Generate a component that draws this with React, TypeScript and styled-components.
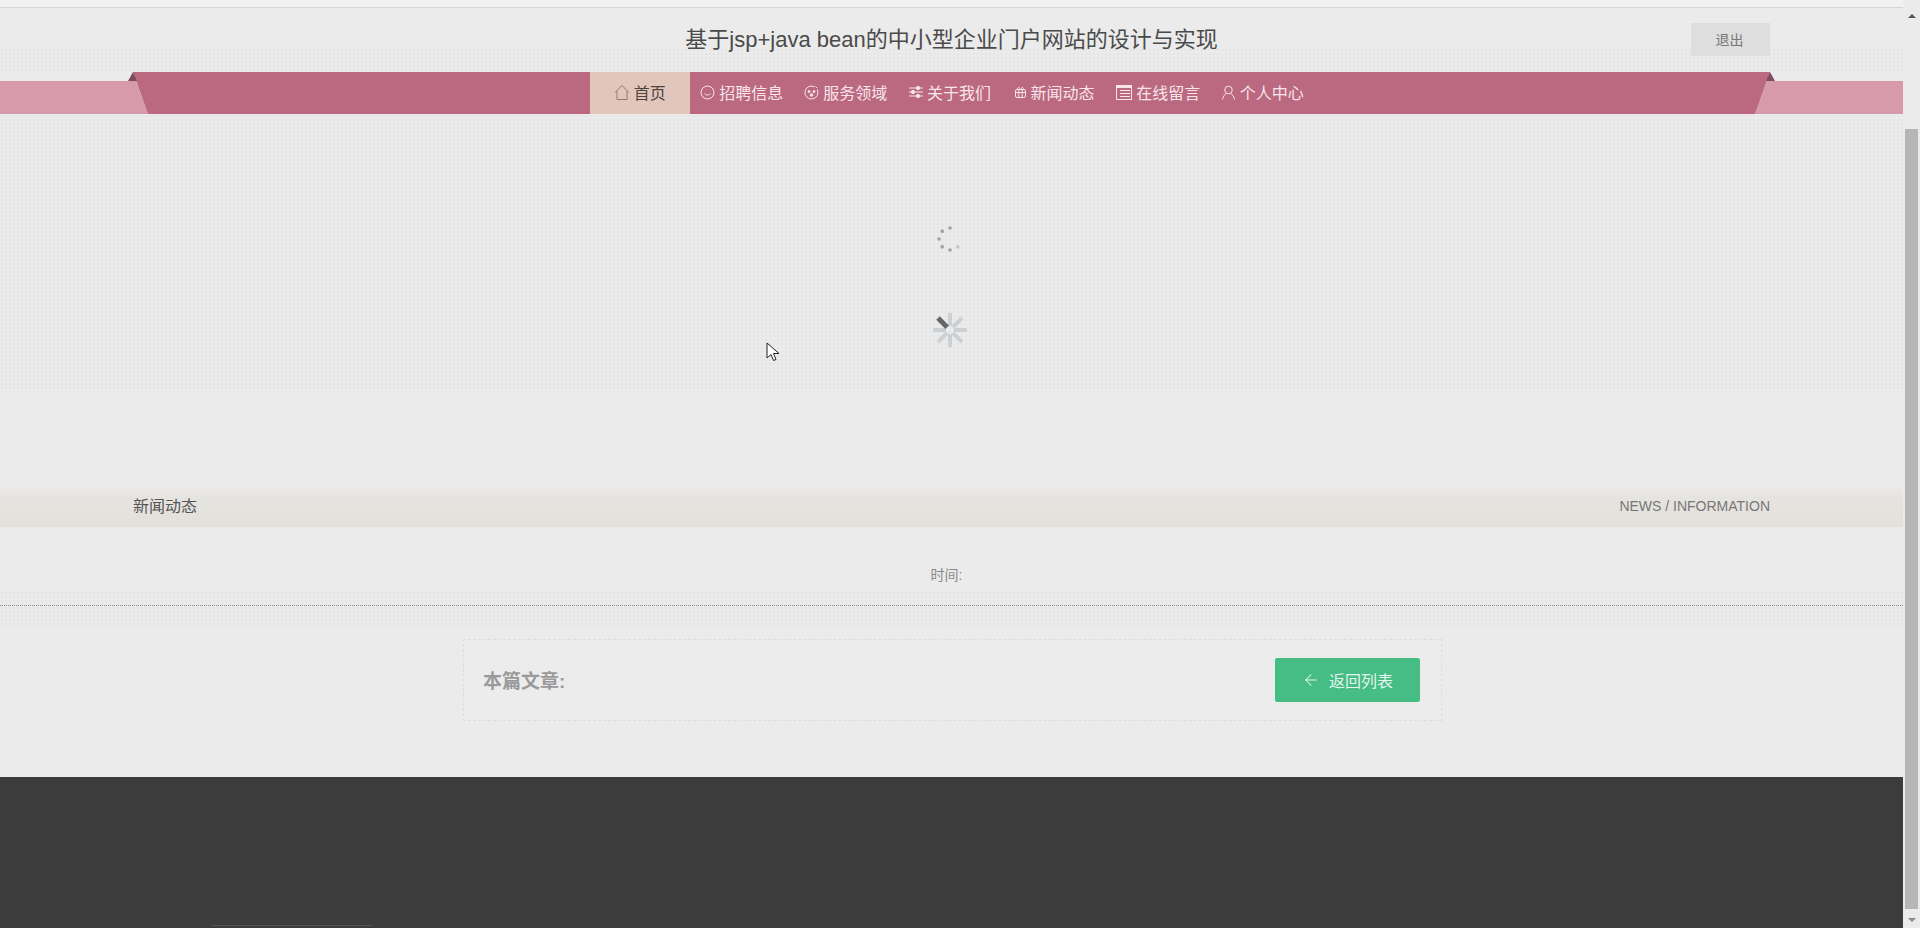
import React from "react";
import styled, { createGlobalStyle, css } from "styled-components";
import { ArrowLeft } from "lucide-react";

const GlobalStyle = createGlobalStyle`
  html, body {
    margin: 0;
    height: 100%;
    overflow: hidden;
    background: #ebebeb;
    font-family: "Liberation Sans", "Noto Sans CJK SC", sans-serif;
  }
  * { box-sizing: border-box; }
`;

// faint dotted noise of the reference, only in the bands where it shows
const dotted = (from: number, to: number) => css`
  background-image:
    linear-gradient(
      to bottom,
      #ebebeb ${from}px,
      transparent ${from}px,
      transparent ${to}px,
      #ebebeb ${to}px
    ),
    radial-gradient(#e5e5e5 0.7px, transparent 0.9px);
  background-size: 100% 100%, 4px 4px;
`;

const Screen = styled.div`
  display: flex;
  width: 1920px;
  height: 928px;
  position: relative;
  overflow: hidden;
`;

const Page = styled.div`
  flex: 1;
  display: flex;
  flex-direction: column;
  min-width: 0;
`;

const TopStrip = styled.div`
  height: 8px;
  background: #f1f1f1;
  border-bottom: 1px solid #d6d6d6;
`;

const Header = styled.header`
  height: 64px;
  display: grid;
  grid-template-columns: 1fr auto 1fr;
  align-items: center;
  padding: 0 133px;
  ${dotted(40, 64)}
`;

const Title = styled.h1`
  grid-column: 2;
  margin: 0 0 6px;
  font-size: 22px;
  font-weight: 400;
  color: #4a4a4a;
`;

const Logout = styled.button`
  grid-column: 3;
  justify-self: end;
  width: 79px;
  height: 33px;
  margin-bottom: 1px;
  padding: 0 2px 2px 0;
  border: 0;
  background: #dedede;
  color: #777;
  font: inherit;
  font-size: 14px;
`;

const NavRow = styled.div`
  display: flex;
  height: 42px;
`;

const Ribbon = styled.div<{ $side: "left" | "right" }>`
  flex: 0 0 148px;
  margin-top: 9px;
  background: #d79aaa;
  clip-path: ${(p) =>
    p.$side === "left"
      ? "polygon(0 0, 136px 0, 100% 100%, 0 100%)"
      : "polygon(12px 0, 100% 0, 100% 100%, 0 100%)"};
`;

const Band = styled.nav`
  flex: 1;
  margin: 0 -15px;
  padding-left: 1px;
  position: relative;
  z-index: 1;
  display: flex;
  justify-content: center;
  background: #ba6981;
  clip-path: polygon(0 0, 100% 0, calc(100% - 15px) 100%, 15px 100%);
`;

const Fold = styled.span<{ $side: "left" | "right" }>`
  position: absolute;
  top: 72px;
  ${(p) => (p.$side === "left" ? "left: 128px;" : "left: 1766px;")}
  width: 9px;
  height: 9px;
  background: #7d4c5f;
  clip-path: ${(p) =>
    p.$side === "left"
      ? "polygon(5px 0, 100% 100%, 0 100%)"
      : "polygon(4px 0, 100% 100%, 0 100%)"};
  z-index: 2;
`;

const NavItem = styled.a<{ $active?: boolean }>`
  display: flex;
  align-items: center;
  justify-content: center;
  gap: 4px;
  padding-bottom: 2px;
  width: ${(p) => (p.$active ? "100px" : "104.1px")};
  font-size: 16px;
  color: ${(p) => (p.$active ? "#4d4340" : "#f8e4ea")};
  background: ${(p) => (p.$active ? "#e2c6bc" : "transparent")};
`;

const Glyph = styled.svg`
  flex: none;
  fill: none;
  stroke: currentColor;
  stroke-width: 1;
`;

const Hero = styled.section`
  height: 371px;
  padding: 111px 3px 0 0;
  display: flex;
  flex-direction: column;
  align-items: center;
  gap: 59px;
  ${dotted(0, 275)}
`;

const SectionBar = styled.div`
  height: 42px;
  padding: 0 133px;
  display: flex;
  justify-content: space-between;
  align-items: center;
  background: linear-gradient(#ebebeb, #e6e4e0 30%, #e3e0da);
`;

const SectionName = styled.span`
  font-size: 16px;
  color: #555;
  margin-top: -2px;
`;

const SectionEn = styled.span`
  font-size: 14px;
  color: #777;
`;

const Meta = styled.div`
  height: 79px;
  padding: 37px 10px 0 0;
  text-align: center;
  font-size: 14px;
  color: #8a8a8a;
  border-bottom: 1px dotted #8c8c8c;
  ${dotted(62, 78)}
`;

const Main = styled.main`
  height: 171px;
  padding: 33px 0 0 2px;
  ${dotted(0, 20)}
`;

const ShareBox = styled.div`
  width: 979px;
  height: 82px;
  margin: 0 auto;
  padding: 0 21px 0 19px;
  display: flex;
  align-items: center;
  justify-content: space-between;
  background: #ececec;
  border: 1px dashed #dcdcdc;
`;

const ShareLabel = styled.span`
  margin-top: -2px;
  font-size: 19px;
  font-weight: 700;
  color: #9a9a9a;
`;

const BackButton = styled.a`
  width: 145px;
  height: 44px;
  display: flex;
  align-items: center;
  justify-content: center;
  gap: 9px;
  border-radius: 2px;
  background: #45bd85;
  color: #e4f6ed;
  font-size: 16px;
`;

const Footer = styled.footer`
  flex: 1;
  position: relative;
  background: #3c3c3c;
`;

const FooterRule = styled.span`
  position: absolute;
  left: 212px;
  bottom: 2px;
  width: 160px;
  height: 1px;
  background: #555;
`;

const ScrollBar = styled.aside`
  flex: 0 0 17px;
  display: flex;
  flex-direction: column;
  align-items: center;
  padding-top: 8px;
  background: #ebebeb;
`;

const ScrollArrow = styled.span<{ $up?: boolean }>`
  flex: none;
  width: 0;
  height: 0;
  margin: 6px 0;
  border-left: 4px solid transparent;
  border-right: 4px solid transparent;
  ${(p) => (p.$up ? "border-bottom: 4px solid #555;" : "border-top: 4px solid #8a8a8a;")}
`;

const ScrollThumb = styled.div`
  flex: 1;
  width: 13px;
  margin-top: 105px;
  margin-bottom: 3px;
  background: #b6b6b6;
`;

const Spinner = styled.svg`
  display: block;
  flex: none;
`;

const Cursor = styled.svg`
  position: absolute;
  left: 766px;
  top: 342px;
`;

const HomeIcon = () => (
  <Glyph width="16" height="17" viewBox="0 0 16 17" style={{ color: "#8d7a72" }}>
    <path d="M1 8.5 8 1.5l7 7M3 7v8.5h10V7" />
  </Glyph>
);

const SmileIcon = () => (
  <Glyph width="15" height="15" viewBox="0 0 15 15">
    <circle cx="7.5" cy="7.5" r="6.5" />
    <path d="M4.5 8.5c1.5 2 4.5 2 6 0" />
  </Glyph>
);

const FaceIcon = () => (
  <Glyph width="15" height="15" viewBox="0 0 15 15">
    <path d="M10.5 1.8A6.5 6.5 0 1 0 13.2 4.5" />
    <path d="M11.5 1.5l1.5 1.5" />
    <circle cx="5" cy="6.5" r="1" fill="currentColor" />
    <circle cx="10" cy="6.5" r="1" fill="currentColor" />
    <circle cx="7.5" cy="10" r="1.3" fill="currentColor" />
  </Glyph>
);

const SlidersIcon = () => (
  <Glyph width="14" height="12" viewBox="0 0 14 12" strokeWidth="1.2">
    <path d="M0 2h14M0 6h14M0 10h14" />
    <circle cx="9" cy="2" r="1.7" fill="currentColor" />
    <circle cx="4" cy="6" r="1.7" fill="currentColor" />
    <circle cx="9" cy="10" r="1.7" fill="currentColor" />
  </Glyph>
);

const GiftIcon = () => (
  <Glyph width="13" height="13" viewBox="0 0 13 13" strokeWidth="1.3">
    <rect x="1.5" y="3.5" width="10" height="8" rx="1.5" />
    <path d="M1.5 6.5h10M4.8 3.5v8M8.2 3.5v8" />
    <path d="M3.5 3.5C3 1 5.5 1 6.5 3.5 7.5 1 10 1 9.5 3.5" />
  </Glyph>
);

const NotebookIcon = () => (
  <Glyph width="16" height="16" viewBox="0 0 16 16">
    <rect x="0.5" y="1.5" width="15" height="14" />
    <path d="M0.5 3h15" strokeWidth="2" />
    <path d="M4 6.5h10M4 9.5h10M4 12.5h10" />
  </Glyph>
);

const UserIcon = () => (
  <Glyph width="15" height="15" viewBox="0 0 15 15" strokeWidth="1.3">
    <circle cx="7.5" cy="5" r="3.8" />
    <path d="M1.5 14.5c.5-3.5 2.5-5.5 4-5.8M13.5 14.5c-.5-3.5-2.5-5.5-4-5.8" />
  </Glyph>
);

const navItems = [
  { label: "招聘信息", Icon: SmileIcon },
  { label: "服务领域", Icon: FaceIcon },
  { label: "关于我们", Icon: SlidersIcon },
  { label: "新闻动态", Icon: GiftIcon },
  { label: "在线留言", Icon: NotebookIcon },
  { label: "个人中心", Icon: UserIcon },
];

const dotAngles = [0, 135, 180, 225, 270, 315];
const barAngles = [0, 45, 90, 135, 180, 225, 270, 315];

const App: React.FC = () => (
  <Screen>
    <GlobalStyle />
    <Page>
      <TopStrip />
      <Header>
        <Title>基于jsp+java bean的中小型企业门户网站的设计与实现</Title>
        <Logout>退出</Logout>
      </Header>
      <NavRow>
        <Ribbon $side="left" />
        <Band>
          <NavItem $active>
            <HomeIcon />
            首页
          </NavItem>
          {navItems.map(({ label, Icon }) => (
            <NavItem key={label}>
              <Icon />
              {label}
            </NavItem>
          ))}
        </Band>
        <Ribbon $side="right" />
      </NavRow>
      <Fold $side="left" />
      <Fold $side="right" />
      <Hero>
        <Spinner width="28" height="28" viewBox="0 0 28 28">
          {dotAngles.map((a, i) => (
            <circle
              key={a}
              cx="14"
              cy="3"
              r="1.8"
              fill="#999"
              opacity={i === 1 ? 0.45 : 0.9}
              transform={`rotate(${a} 14 14)`}
            />
          ))}
        </Spinner>
        <Spinner width="36" height="36" viewBox="0 0 36 36">
          {barAngles.map((a) => (
            <rect
              key={a}
              x={a === 315 ? 15.5 : 16}
              y="1"
              width={a === 315 ? 5 : 4}
              height="13"
              fill={a === 315 ? "#666" : "#cbd0d4"}
              transform={`rotate(${a} 18 18)`}
            />
          ))}
        </Spinner>
      </Hero>
      <SectionBar>
        <SectionName>新闻动态</SectionName>
        <SectionEn>NEWS / INFORMATION</SectionEn>
      </SectionBar>
      <Meta>时间:</Meta>
      <Main>
        <ShareBox>
          <ShareLabel>本篇文章:</ShareLabel>
          <BackButton>
            <ArrowLeft size={18} strokeWidth={1.4} />
            返回列表
          </BackButton>
        </ShareBox>
      </Main>
      <Footer>
        <FooterRule />
      </Footer>
    </Page>
    <ScrollBar>
      <ScrollArrow $up />
      <ScrollThumb />
      <ScrollArrow />
    </ScrollBar>
    <Cursor width="14" height="20" viewBox="0 0 14 20">
      <path d="M1 1v15l4-3.5 2.5 6 2.5-1-2.5-6H13z" fill="#fff" stroke="#222" strokeWidth="1" />
    </Cursor>
  </Screen>
);

export default App;
